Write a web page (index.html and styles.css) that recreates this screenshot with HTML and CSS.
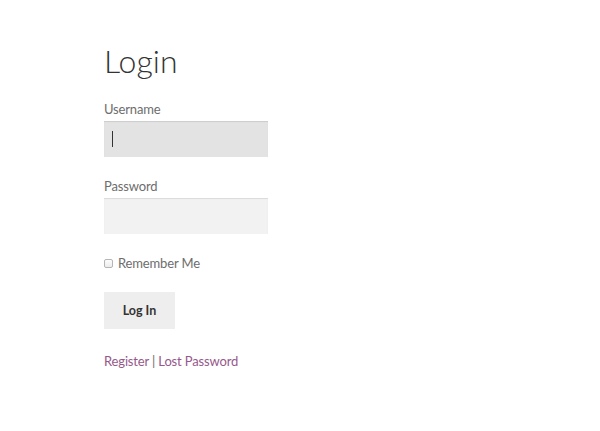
FILE: index.html
```html
<!DOCTYPE html>
<html>
<head>
<meta charset="utf-8">
<link rel="stylesheet" href="styles.css">
</head>
<body>
<main class="page">
  <h1 class="title">Login</h1>
  <form class="login">
    <div class="field">
      <label class="label" for="user">Username</label>
      <div class="input focused"><span class="caret"></span></div>
    </div>
    <div class="field">
      <label class="label" for="pass">Password</label>
      <div class="input"></div>
    </div>
    <div class="remember">
      <span class="check"></span>
      <span class="remember-text">Remember Me</span>
    </div>
    <div class="button">Log In</div>
    <p class="links"><a href="#">Register</a> | <a href="#">Lost Password</a></p>
  </form>
</main>
</body>
</html>
```
FILE: styles.css
```css
html, body {
  margin: 0;
  padding: 0;
  background: #ffffff;
}
body {
  font-family: Lato, "Liberation Sans", sans-serif;
  color: #6d6d6d;
}
.page {
  padding: 39px 0 0 104px;
}
.title {
  margin: 0;
  font-weight: 300;
  font-size: 32px;
  line-height: 44px;
  color: #333333;
}
.login {
  margin-top: 18px;
  display: flex;
  flex-direction: column;
  align-items: flex-start;
}
.field {
  display: flex;
  flex-direction: column;
  margin-bottom: 21px;
}
.label {
  font-size: 13px;
  letter-spacing: -0.15px;
  line-height: 17px;
  margin-bottom: 3px;
  color: #6d6d6d;
}
.input {
  width: 164px;
  height: 36px;
  box-sizing: border-box;
  background: #f2f2f2;
  box-shadow: inset 0 1px 1px rgba(0,0,0,0.1);
  padding: 10px 8px;
}
.input.focused {
  background: #e3e3e3;
}
.caret {
  display: block;
  width: 1px;
  height: 16px;
  background: #333;
}
.remember {
  display: flex;
  align-items: center;
  gap: 5px;
  height: 18px;
  margin-top: -1px;
}
.check {
  width: 7px;
  height: 7px;
  border: 1px solid #b5b5b5;
  border-radius: 2px;
  background: linear-gradient(#fdfdfd, #ececec);
}
.remember-text {
  font-size: 13px;
  letter-spacing: -0.15px;
  color: #6d6d6d;
}
.button {
  margin-top: 20px;
  width: 71px;
  height: 37px;
  background: #eeeeee;
  color: #333333;
  font-weight: 700;
  font-size: 12.5px;
  display: flex;
  align-items: center;
  justify-content: center;
}
.links {
  margin: 23px 0 0;
  font-size: 13px;
  letter-spacing: -0.15px;
  line-height: 18px;
  color: #6d6d6d;
}
.links a {
  color: #96588a;
  text-decoration: none;
}
```
